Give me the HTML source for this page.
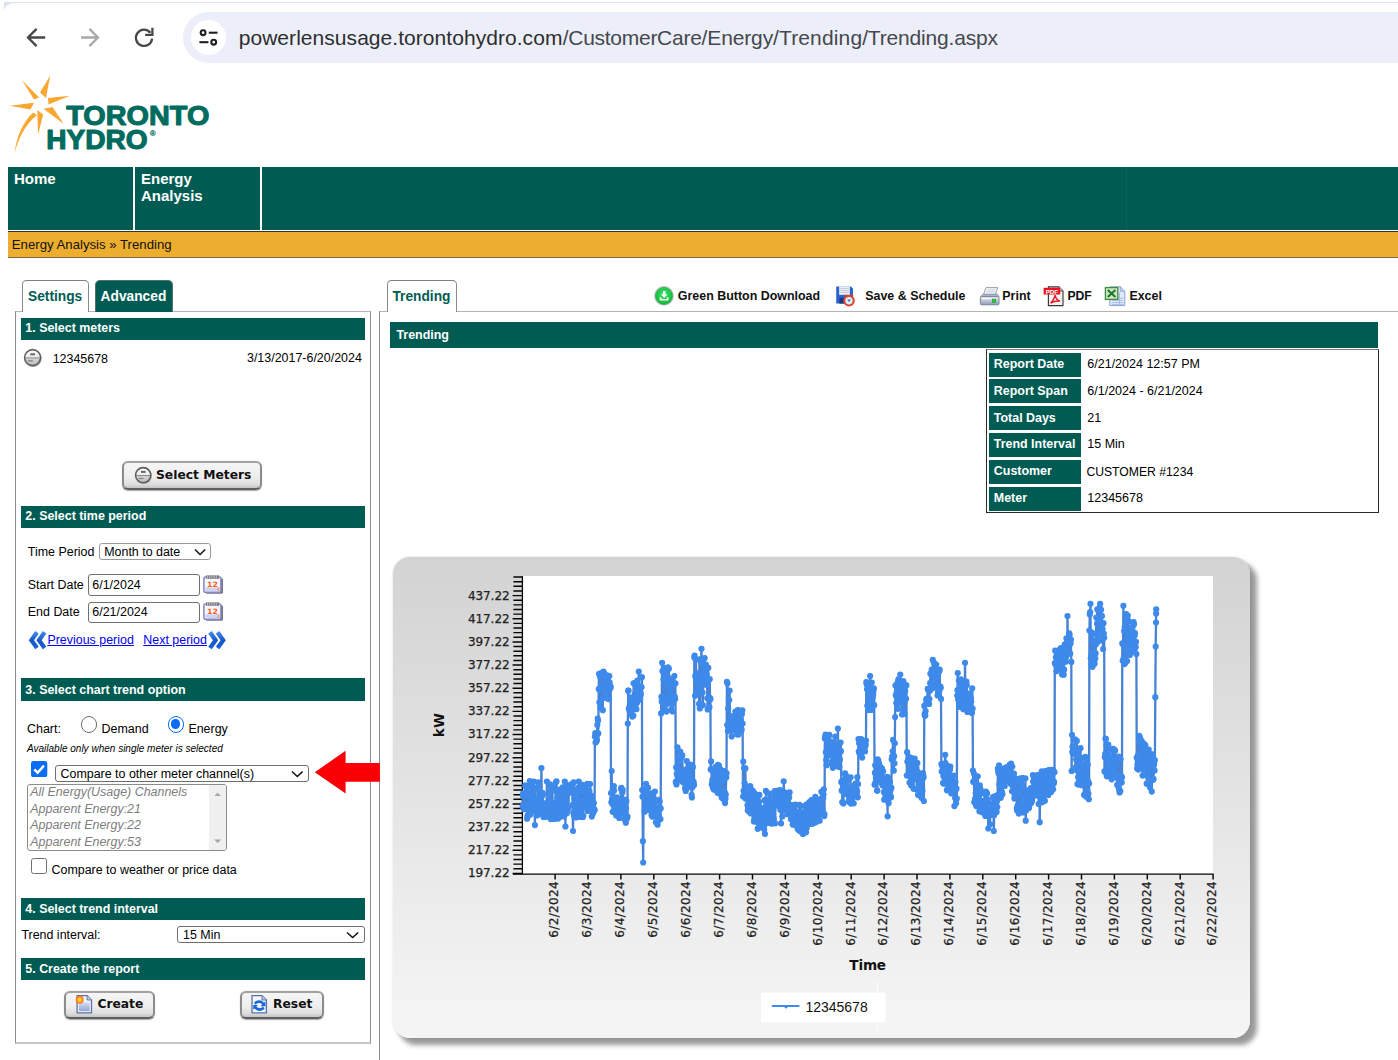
<!DOCTYPE html>
<html lang="en"><head><meta charset="utf-8"><title>Trending</title>
<style>
*{box-sizing:border-box;margin:0;padding:0}
html,body{width:1398px;height:1060px;overflow:hidden;background:#fff}
body{position:relative;font-family:"Liberation Sans",sans-serif;color:#000}
.a{position:absolute}
.t{position:absolute;white-space:nowrap}
.hdr{position:absolute;background:#005c53;left:20.7px;width:344px;height:21.6px}
.btn{position:absolute;border:2px solid;border-color:#a2a2a2 #8c8c8c #606060 #8c8c8c;border-radius:6px;background:linear-gradient(#f5f5f5 0%,#eeeeee 55%,#dedede 85%,#c4c4c4 100%);box-shadow:0 .600px 1px rgba(0,0,0,.35)}
.sel{position:absolute;border:1px solid #9a9a9a;border-radius:3px;background:#fff}
.inp{position:absolute;border:1px solid #6f6f6f;border-radius:3px;background:#fff}
.cell{position:absolute;background:#005c53;left:989px;width:91.7px;height:24.2px}
</style></head>
<body>

<div class="a" style="left:4px;top:1.8px;width:1394px;height:1.3px;background:#dde3ec"></div>
<div class="a" style="left:4px;top:2px;width:11px;height:8px;background:#dde3ec;overflow:hidden"><div style="position:absolute;left:0;top:1px;width:30px;height:30px;border-top-left-radius:11px 8px;background:#fff"></div></div>
<svg class="a" style="left:0;top:0" width="180" height="70" viewBox="0 0 180 70" fill="none" stroke-width="2.3"><path d="M45.2 37.5H28.6M36.6 28.9L28 37.5l8.6 8.6" stroke="#474747"/><path d="M81 37.5h16.6M89.4 28.9L98 37.5l-8.6 8.6" stroke="#a9a9a9"/><path d="M152.100 38.600a8.100 8.100 0 1 1-1.700-5.800" stroke="#474747"/><path d="M152.400 27.800v7h-7.200" stroke="#474747"/></svg>
<div class="a" style="left:183px;top:12px;width:1300px;height:51px;border-radius:25.5px;background:#eceff9"></div>
<div class="a" style="left:190.6px;top:19.7px;width:35.6px;height:35.6px;border-radius:50%;background:#fff"></div>
<svg class="a" style="left:195px;top:25px" width="28" height="26" viewBox="195 25 28 26" fill="none" stroke="#1f1f1f" stroke-width="2.1"><circle cx="203.1" cy="32.7" r="2.4"/><path d="M208.8 32.7h8.7"/><path d="M199.4 42.2h9"/><circle cx="213.7" cy="42.2" r="2.4"/></svg>
<span class="t" style="left:238.70px;top:26px;font-size:21px;line-height:23px;color:#2e2e2e;letter-spacing:0.05px;">powerlensusage.torontohydro.com</span>
<span class="t" style="left:562.70px;top:26px;font-size:21px;line-height:23px;color:#45484d;letter-spacing:-0.27px;">/CustomerCare</span>
<span class="t" style="left:701.60px;top:26px;font-size:21px;line-height:23px;color:#45484d;letter-spacing:-0.14px;">/Energy</span>
<span class="t" style="left:773.00px;top:26px;font-size:21px;line-height:23px;color:#45484d;letter-spacing:0.14px;">/Trending</span>
<span class="t" style="left:862.20px;top:26px;font-size:21px;line-height:23px;color:#45484d;letter-spacing:-0.17px;">/Trending.aspx</span>
<svg class="a" style="left:0;top:70px" width="230" height="95" viewBox="0 70 230 95"><g fill="#f9a732"><polygon points="50.2,75.5 46,98 40,92.5"/><polygon points="22,80 39,97.5 34,99.5"/><polygon points="70,95.8 48.5,104.5 48,98"/><polygon points="10,105.8 34,102.8 30.5,109.6"/><polygon points="63.8,124 43.5,108.8 52.5,107"/><polygon points="38,134.5 37.3,110 43.2,114.5"/><path d="M33.2 112.4C22.5 122 16.5 137 14.3 154.200c4-16 11-30 22.600-39z"/></g><g fill="#006b5f" font-family='"Liberation Sans", sans-serif' font-weight="700" stroke="#006b5f" stroke-width="1.1" stroke-linejoin="round"><text x="66.3" y="124.600" font-size="27.8" textLength="143" lengthAdjust="spacingAndGlyphs">TORONTO</text><text x="46.2" y="148.900" font-size="26.8" textLength="101.400" lengthAdjust="spacingAndGlyphs">HYDRO</text><text x="150" y="135.600" font-size="7.5" stroke-width=".2">®</text></g></svg>
<div class="a" style="left:8px;top:167px;width:1390px;height:62.6px;background:#005c53"></div>
<div class="a" style="left:133px;top:167px;width:2px;height:62.6px;background:#fff"></div>
<div class="a" style="left:259.6px;top:167px;width:2px;height:62.6px;background:#fff"></div>
<div class="a" style="left:1126px;top:167px;width:1px;height:62.6px;background:#0b655c"></div>
<span class="t" style="left:14.00px;top:170px;font-size:15px;line-height:17px;font-weight:700;color:#fff;">Home</span>
<span class="t" style="left:141.00px;top:170px;font-size:15px;line-height:17px;font-weight:700;color:#fff;">Energy</span>
<span class="t" style="left:141.00px;top:187px;font-size:15px;line-height:17px;font-weight:700;color:#fff;">Analysis</span>
<div class="a" style="left:8px;top:230.6px;width:1390px;height:27.6px;background:#edae30;border-top:1px solid #3a3522;border-bottom:1.4px solid #7c6a3c"></div>
<span class="t" style="left:11.80px;top:237px;font-size:13.2px;line-height:15px;color:#111;">Energy Analysis » Trending</span>
<div class="a" style="left:15px;top:311.3px;width:356.3px;height:733px;border:1px solid #8d8d8d;border-top:1.400px solid #b4b4b4;border-bottom:2px solid #c6c6c6;background:#fff"></div>
<div class="a" style="left:21.8px;top:279.8px;width:67px;height:32.6px;border:1.200px solid #8a8a8a;border-top:1.600px solid #808080;border-bottom:none;border-radius:4.500px 4.500px 0 0;background:#fff"></div>
<div class="a" style="left:95px;top:279.8px;width:78px;height:32px;border:1.2px solid #56706c;border-bottom:none;border-radius:5px 5px 0 0;background:#005c53"></div>
<span class="t" style="left:28.00px;top:289px;font-size:13.75px;line-height:15px;font-weight:700;color:#005c53;">Settings</span>
<span class="t" style="left:100.60px;top:289px;font-size:13.75px;line-height:15px;font-weight:700;color:#fff;">Advanced</span>
<div class="hdr" style="top:318.3px;height:21.6px"></div>
<span class="t" style="left:25.30px;top:321px;font-size:12.45px;line-height:14px;font-weight:700;color:#fff;">1. Select meters</span>
<svg class="a" style="left:23.3px;top:348.0px" width="20.2" height="20.2" viewBox="-9.6 -9.6 20.2 20.2"><defs><linearGradient id="mg32" x1="0" y1="0" x2="0" y2="1"><stop offset="0" stop-color="#fafafa"/><stop offset=".5" stop-color="#ececec"/><stop offset=".52" stop-color="#d4d4d4"/><stop offset="1" stop-color="#bcbcbc"/></linearGradient></defs><circle cx=".6" cy=".8" r="8.6" fill="#bbb"/><circle r="8.0" fill="url(#mg32)" stroke="#5e5e5e" stroke-width="1.600"/><path d="M-7.1 .3H7.1" stroke="#8a8a8a" stroke-width="1"/><rect x="-2.2" y="-4.3" width="4.6" height="2" fill="#666"/><rect x="-4.6" y="2.6" width="4.8" height="1.3" fill="#888"/></svg>
<span class="t" style="left:52.70px;top:352px;font-size:12.45px;line-height:14px;">12345678</span>
<span class="t" style="left:247.00px;top:351px;font-size:12.45px;line-height:14px;">3/13/2017-6/20/2024</span>
<div class="btn" style="left:122.2px;top:461.2px;width:140.2px;height:29px"></div>
<svg class="a" style="left:133.7px;top:466.1px" width="19.4" height="19.4" viewBox="-9.2 -9.2 19.4 19.4"><defs><linearGradient id="mg142" x1="0" y1="0" x2="0" y2="1"><stop offset="0" stop-color="#fafafa"/><stop offset=".5" stop-color="#ececec"/><stop offset=".52" stop-color="#d4d4d4"/><stop offset="1" stop-color="#bcbcbc"/></linearGradient></defs><circle cx=".6" cy=".8" r="8.2" fill="#bbb"/><circle r="7.6" fill="url(#mg142)" stroke="#5e5e5e" stroke-width="1.600"/><path d="M-6.699999999999999 .3H6.699999999999999" stroke="#8a8a8a" stroke-width="1"/><rect x="-2.2" y="-4.3" width="4.6" height="2" fill="#666"/><rect x="-4.6" y="2.6" width="4.8" height="1.3" fill="#888"/></svg>
<span class="t" style="left:156.00px;top:468px;font-size:12.3px;line-height:14px;font-weight:700;color:#111;font-family:'DejaVu Sans', sans-serif;">Select Meters</span>
<div class="hdr" style="top:505.9px;height:21.9px"></div>
<span class="t" style="left:25.30px;top:509px;font-size:12.45px;line-height:14px;font-weight:700;color:#fff;">2. Select time period</span>
<span class="t" style="left:27.80px;top:545px;font-size:12.45px;line-height:14px;">Time Period</span>
<div class="sel" style="left:98.7px;top:543.3px;width:112.8px;height:16.8px"></div>
<span class="t" style="left:104.20px;top:545px;font-size:12.45px;line-height:14px;">Month to date</span>
<svg class="a" style="left:193.6px;top:548.2px" width="12.200000000000017" height="8" viewBox="193.6 548.2 12.200000000000017 8"><path d="M194.6 549.7L199.7 554.7L204.8 549.7" fill="none" stroke="#111" stroke-width="1.5"/></svg>
<span class="t" style="left:27.80px;top:578px;font-size:12.45px;line-height:14px;">Start Date</span>
<div class="inp" style="left:88.2px;top:574.2px;width:111.6px;height:21.800px"></div>
<span class="t" style="left:92.30px;top:578px;font-size:12.45px;line-height:14px;">6/1/2024</span>
<span class="t" style="left:27.80px;top:605px;font-size:12.45px;line-height:14px;">End Date</span>
<div class="inp" style="left:88.2px;top:601.6px;width:111.6px;height:21.1px"></div>
<span class="t" style="left:92.30px;top:605px;font-size:12.45px;line-height:14px;">6/21/2024</span>
<svg class="a" style="left:202.6px;top:574.8px" width="21" height="20" viewBox="0 0 21 20"><rect x="2.600" y="3.200" width="17.400" height="15.600" rx="1.600" fill="#5e5e6c" opacity=".85"/><rect x=".900" y="1.900" width="17" height="15.400" rx="1.500" fill="#f6f6ff" stroke="#8686c6" stroke-width="1.500"/><rect x="3" y=".300" width="13" height="3.600" fill="#7c7c86"/><path d="M4.500 .300v3.600M6.700 .300v3.600M8.900 .300v3.600M11.100 .300v3.600M13.300 .300v3.600" stroke="#d8d8e0" stroke-width=".7"/><rect x="2.400" y="12.400" width="14" height="3.600" fill="#cdd2f3"/><rect x="14.500" y="12.400" width="1.900" height="3.600" fill="#f0a070"/><text x="9.400" y="11.900" font-size="7.300" font-weight="700" fill="#ff5a12" text-anchor="middle" textLength="10.800" lengthAdjust="spacingAndGlyphs" font-family='"DejaVu Sans", sans-serif'>12</text></svg>
<svg class="a" style="left:202.6px;top:602px" width="21" height="20" viewBox="0 0 21 20"><rect x="2.600" y="3.200" width="17.400" height="15.600" rx="1.600" fill="#5e5e6c" opacity=".85"/><rect x=".900" y="1.900" width="17" height="15.400" rx="1.500" fill="#f6f6ff" stroke="#8686c6" stroke-width="1.500"/><rect x="3" y=".300" width="13" height="3.600" fill="#7c7c86"/><path d="M4.500 .300v3.600M6.700 .300v3.600M8.900 .300v3.600M11.100 .300v3.600M13.300 .300v3.600" stroke="#d8d8e0" stroke-width=".7"/><rect x="2.400" y="12.400" width="14" height="3.600" fill="#cdd2f3"/><rect x="14.500" y="12.400" width="1.900" height="3.600" fill="#f0a070"/><text x="9.400" y="11.900" font-size="7.300" font-weight="700" fill="#ff5a12" text-anchor="middle" textLength="10.800" lengthAdjust="spacingAndGlyphs" font-family='"DejaVu Sans", sans-serif'>12</text></svg>
<svg class="a" style="left:28.2px;top:631px" width="19" height="19" viewBox="0 0 19 19"><defs><linearGradient id="bg28" x1="0" y1="0" x2="0" y2="1"><stop offset="0" stop-color="#3f8ae6"/><stop offset=".5" stop-color="#1858c8"/><stop offset="1" stop-color="#1a62d2"/></linearGradient></defs><g  fill="none" stroke="url(#bg28)" stroke-width="4.300"><path d="M9 1.300L3.400 9.200 9 17.100"/><path d="M16.600 1.300L11 9.200l5.600 7.900"/></g></svg>
<span class="t" style="left:47.40px;top:633px;font-size:12.45px;line-height:14px;color:#0000ee;text-decoration:underline;">Previous period</span>
<span class="t" style="left:143.30px;top:633px;font-size:12.45px;line-height:14px;color:#0000ee;text-decoration:underline;">Next period</span>
<svg class="a" style="left:207.8px;top:631px" width="19" height="19" viewBox="0 0 19 19"><defs><linearGradient id="bg207" x1="0" y1="0" x2="0" y2="1"><stop offset="0" stop-color="#3f8ae6"/><stop offset=".5" stop-color="#1858c8"/><stop offset="1" stop-color="#1a62d2"/></linearGradient></defs><g transform="translate(18.600 0) scale(-1 1)" fill="none" stroke="url(#bg207)" stroke-width="4.300"><path d="M9 1.300L3.400 9.200 9 17.100"/><path d="M16.600 1.300L11 9.200l5.600 7.900"/></g></svg>
<div class="hdr" style="top:678.2px;height:22.4px"></div>
<span class="t" style="left:25.30px;top:683px;font-size:12.45px;line-height:14px;font-weight:700;color:#fff;">3. Select chart trend option</span>
<span class="t" style="left:27.00px;top:722px;font-size:12.45px;line-height:14px;">Chart:</span>
<div class="a" style="left:80.6px;top:716.4px;width:16.2px;height:16.2px;border-radius:50%;border:1.25px solid #6f6f6f;background:#fff"></div>
<span class="t" style="left:101.60px;top:722px;font-size:12.45px;line-height:14px;">Demand</span>
<div class="a" style="left:167.9px;top:716.4px;width:16.2px;height:16.2px;border-radius:50%;border:1.5px solid #0a6cf5;background:#fff"><div style="position:absolute;left:1.700px;top:1.700px;width:9.800px;height:9.800px;border-radius:50%;background:#0a6cf5"></div></div>
<span class="t" style="left:188.40px;top:722px;font-size:12.45px;line-height:14px;">Energy</span>
<span class="t" style="left:27.00px;top:743px;font-size:10.02px;line-height:11px;font-style:italic;">Available only when single meter is selected</span>
<svg class="a" style="left:31.4px;top:761.1px" width="16.3" height="16.3" viewBox="0 0 16 16"><rect width="16" height="16" rx="2.4" fill="#0b6cf4"/><path d="M3.3 8.2l3.2 3.3 6.2-7" fill="none" stroke="#fff" stroke-width="2.400"/></svg>
<div class="sel" style="left:55.2px;top:765.200px;width:253.800px;height:16.600px;border-color:#6f6f6f"></div>
<span class="t" style="left:60.50px;top:767px;font-size:12.45px;line-height:14px;">Compare to other meter channel(s)</span>
<svg class="a" style="left:290.8px;top:769.5px" width="12.599999999999966" height="8" viewBox="290.8 769.5 12.599999999999966 8"><path d="M291.8 771.0L297.1 776.0L302.4 771.0" fill="none" stroke="#111" stroke-width="1.5"/></svg>
<div class="a" style="left:26.6px;top:784.3px;width:200.4px;height:66.400px;border:1px solid #8c8c8c;border-radius:3px;background:#fff;overflow:hidden"><div style="position:absolute;right:0;top:0;width:17px;height:100%;background:#f0f0f0"></div><svg style="position:absolute;right:4.800px;top:6.600px" width="7.400" height="4.600" viewBox="0 0 9 6"><path d="M0 5.500L4.500 .500 9 5.500z" fill="#a8a8a8"/></svg><svg style="position:absolute;right:4.800px;bottom:6.600px" width="7.400" height="4.600" viewBox="0 0 9 6"><path d="M0 .500L4.500 5.500 9 .500z" fill="#a8a8a8"/></svg></div>
<span class="t" style="left:30.30px;top:785px;font-size:12.45px;line-height:14px;color:#7d7d7d;font-style:italic;">All Energy(Usage) Channels</span>
<span class="t" style="left:30.30px;top:802px;font-size:12.45px;line-height:14px;color:#7d7d7d;font-style:italic;">Apparent Energy:21</span>
<span class="t" style="left:30.30px;top:818px;font-size:12.45px;line-height:14px;color:#7d7d7d;font-style:italic;">Apparent Energy:22</span>
<span class="t" style="left:30.30px;top:835px;font-size:12.45px;line-height:14px;color:#7d7d7d;font-style:italic;">Apparent Energy:53</span>
<div class="a" style="left:31px;top:857.8px;width:16.4px;height:16.2px;border:1.25px solid #6f6f6f;border-radius:2.6px;background:#fff"></div>
<span class="t" style="left:51.50px;top:863px;font-size:12.45px;line-height:14px;">Compare to weather or price data</span>
<div class="hdr" style="top:898.3px;height:21.7px"></div>
<span class="t" style="left:25.30px;top:902px;font-size:12.45px;line-height:14px;font-weight:700;color:#fff;">4. Select trend interval</span>
<span class="t" style="left:21.40px;top:928px;font-size:12.45px;line-height:14px;">Trend interval:</span>
<div class="sel" style="left:177.4px;top:926.4px;width:187.5px;height:16.6px;border-color:#6f6f6f"></div>
<span class="t" style="left:183.00px;top:928px;font-size:12.45px;line-height:14px;">15 Min</span>
<svg class="a" style="left:346.2px;top:931.0px" width="13.199999999999989" height="8" viewBox="346.2 931.0 13.199999999999989 8"><path d="M347.2 932.5L352.79999999999995 937.5L358.4 932.5" fill="none" stroke="#111" stroke-width="1.5"/></svg>
<div class="hdr" style="top:957.9px;height:22.4px"></div>
<span class="t" style="left:25.30px;top:962px;font-size:12.45px;line-height:14px;font-weight:700;color:#fff;">5. Create the report</span>
<div class="btn" style="left:64px;top:990.7px;width:90.8px;height:28.6px"></div>
<svg class="a" style="left:74.500px;top:994px" width="18" height="20" viewBox="74.500 994 18 20"><defs><linearGradient id="cg" x1="0" y1="0" x2="0" y2="1"><stop offset="0" stop-color="#d3dcf2"/><stop offset="1" stop-color="#92a6d6"/></linearGradient></defs><path d="M76.600 995.600h10l4.400 4.400v12.800h-14.400z" fill="#f3f6fc" stroke="#5a72a8" stroke-width="1.300"/><path d="M86.600 995.600v4.400h4.400" fill="#b9c6e6" stroke="#5a72a8" stroke-width=".900"/><rect x="78.400" y="1002.400" width="10.800" height="8.800" fill="url(#cg)"/><circle cx="79.200" cy="999.700" r="4" fill="#ff7a2a"/><circle cx="79.200" cy="999.700" r="2.300" fill="#ffd21f"/></svg>
<span class="t" style="left:97.40px;top:997px;font-size:12.3px;line-height:14px;font-weight:700;color:#111;font-family:'DejaVu Sans', sans-serif;">Create</span>
<div class="btn" style="left:239.9px;top:990.7px;width:83.8px;height:28.6px"></div>
<svg class="a" style="left:250px;top:994px" width="18" height="20" viewBox="250 994 18 20"><path d="M252 995.600h10l4.400 4.400v12.800h-14.400z" fill="#f3f6fc" stroke="#5a72a8" stroke-width="1.300"/><path d="M262 995.600v4.400h4.400" fill="#b9c6e6" stroke="#5a72a8" stroke-width=".900"/><path d="M254 1002.800c2.200-3.200 7.600-3.400 10 0l1.400-1.200v4.600h-4.800l1.600-1.600c-1.600-2-5-2-6.600.200z" fill="#1c66dc"/><path d="M264.600 1008.400c-2.200 3.200-7.600 3.400-10 0l-1.400 1.200v-4.600h4.800l-1.600 1.600c1.600 2 5 2 6.600-.200z" fill="#1c66dc"/></svg>
<span class="t" style="left:273.00px;top:997px;font-size:12.3px;line-height:14px;font-weight:700;color:#111;font-family:'DejaVu Sans', sans-serif;">Reset</span>
<div class="a" style="left:379.2px;top:311.3px;width:1100px;height:800px;border:1px solid #8d8d8d;border-top-color:#b4b4b4;background:#fff"></div>
<div class="a" style="left:386.5px;top:280.2px;width:70.4px;height:32.2px;border:1.200px solid #8a8a8a;border-top:1.600px solid #808080;border-bottom:none;border-radius:4.500px 4.500px 0 0;background:#fff"></div>
<span class="t" style="left:392.40px;top:289px;font-size:13.75px;line-height:15px;font-weight:700;color:#005c53;">Trending</span>
<div class="a" style="left:389.7px;top:322.2px;width:988.8px;height:25.500px;background:#005c53"></div>
<span class="t" style="left:396.40px;top:328px;font-size:12.45px;line-height:14px;font-weight:700;color:#fff;">Trending</span>
<svg class="a" style="left:650px;top:282px" width="480" height="28" viewBox="650 282 480 28"><defs><radialGradient id="gb" cx=".5" cy=".4" r=".6"><stop offset="0" stop-color="#3be66a"/><stop offset="1" stop-color="#12b238"/></radialGradient><linearGradient id="pr" x1="0" y1="0" x2="0" y2="1"><stop offset="0" stop-color="#eef1f6"/><stop offset="1" stop-color="#8e9bb6"/></linearGradient></defs><circle cx="664" cy="295.9" r="9.8" fill="#c4b6c4"/><circle cx="664" cy="295.9" r="8.8" fill="url(#gb)"/><path d="M662.9 291.100h2.600v3.500h2l-3.300 3.500-3.300-3.500h2z" fill="#fff"/><path d="M660.500 297.200v2.600h7.200v-2.600" fill="none" stroke="#fff" stroke-width="1.600" opacity=".92"/><path d="M836.200 286.400h14.600l2.200 2v15.200h-16.800z" fill="#2b63cc"/><rect x="839.200" y="286.400" width="10.600" height="8.400" fill="#f1f3f8"/><path d="M840.200 288.400h8.600M840.200 290.400h8.600M840.200 292.400h8.600" stroke="#b4b8c6" stroke-width=".8"/><rect x="839.400" y="297.600" width="6" height="6" fill="#173a8e"/><circle cx="849" cy="300.700" r="5.800" fill="#e2432c"/><circle cx="849" cy="300.700" r="3.700" fill="#d8f0f6"/><path d="M847.200 299.600l1.800 2.400 1.800-2.400z" fill="#3b6fb3"/><rect x="845" y="294.800" width="2.200" height="1.600" fill="#e2432c" transform="rotate(-40 846 295.600)"/><rect x="851" y="294.800" width="2.200" height="1.600" fill="#e2432c" transform="rotate(40 852 295.600)"/><path d="M986 287.600h11.600l-2.200 7.200h-12z" fill="#f3f4f7" stroke="#8d95a8" stroke-width=".9"/><path d="M987.400 289.800h7.600M986.800 291.800h7.600" stroke="#c3c8d3" stroke-width=".8"/><path d="M983 294.200h14.400l1.800 2.600h-18.800z" fill="#aab4c8" stroke="#7a869e" stroke-width=".7"/><rect x="980.400" y="296.600" width="18.600" height="8.200" rx="1.300" fill="url(#pr)" stroke="#6f7b93" stroke-width=".9"/><rect x="982" y="298" width="9" height="1.200" fill="#fff" opacity=".8"/><rect x="992.400" y="299.200" width="3.400" height="3.300" fill="#1fd431" stroke="#0e8e1c" stroke-width=".5"/><path d="M1048.400 286.800h10.400l4.200 4.200v14.600h-14.600z" fill="#f4f6f6" stroke="#383838" stroke-width="1.150"/><path d="M1058.800 286.800v4.200h4.200" fill="#dcdcdc" stroke="#383838" stroke-width=".9"/><rect x="1043.600" y="287.800" width="16.600" height="6.700" fill="#e8141f"/><text x="1051.900" y="293.500" font-size="6.200" font-weight="700" fill="#fff" text-anchor="middle" font-family='"Liberation Sans", sans-serif'>PDF</text><path d="M1050.600 303.200c2.600-2.800 4.200-5.400 4.500-8 .6 3.200 2.500 5.200 5 5.900-3.500-.3-7 .5-9.500 2.100z" fill="none" stroke="#e8141f" stroke-width="1.350"/><path d="M1109.800 286.800h10.600l4.400 4.400v14.400h-15z" fill="#dfe7fa" stroke="#8a9fd6" stroke-width="1"/><path d="M1120.400 286.800v4.400h4.400" fill="#c3d0f2" stroke="#8a9fd6" stroke-width=".8"/><path d="M1112 298.200h11M1112 300.400h11M1112 302.600h11M1112 304.600h11M1119.500 292.500v12.500" stroke="#a5b7e6" stroke-width=".9"/><rect x="1105.400" y="287.600" width="12.400" height="11.800" fill="#cfe6c6" stroke="#3c8c3c" stroke-width="1.300"/><path d="M1107.800 290l7.600 7M1115.400 290l-7.600 7" stroke="#1f7a2c" stroke-width="2.100"/></svg>
<span class="t" style="left:677.80px;top:289px;font-size:12.45px;line-height:14px;font-weight:700;color:#111;">Green Button Download</span>
<span class="t" style="left:865.20px;top:289px;font-size:12.45px;line-height:14px;font-weight:700;color:#111;">Save &amp; Schedule</span>
<span class="t" style="left:1002.30px;top:289px;font-size:12.45px;line-height:14px;font-weight:700;color:#111;">Print</span>
<span class="t" style="left:1067.40px;top:289px;font-size:12.2px;line-height:14px;font-weight:700;color:#111;">PDF</span>
<span class="t" style="left:1129.40px;top:289px;font-size:12.45px;line-height:14px;font-weight:700;color:#111;">Excel</span>
<div class="a" style="left:986.3px;top:349.3px;width:392.6px;height:164px;border:1.2px solid #2b2b2b;border-top-color:#777;background:#fff"></div>
<div class="cell" style="top:352.5px"></div>
<span class="t" style="left:993.80px;top:357px;font-size:12.45px;line-height:14px;font-weight:700;color:#fff;">Report Date</span>
<span class="t" style="left:1087.30px;top:357px;font-size:12.5px;line-height:14px;">6/21/2024 12:57 PM</span>
<div class="cell" style="top:379.3px"></div>
<span class="t" style="left:993.80px;top:384px;font-size:12.45px;line-height:14px;font-weight:700;color:#fff;">Report Span</span>
<span class="t" style="left:1087.30px;top:384px;font-size:12.5px;line-height:14px;">6/1/2024 - 6/21/2024</span>
<div class="cell" style="top:406.1px"></div>
<span class="t" style="left:993.80px;top:411px;font-size:12.45px;line-height:14px;font-weight:700;color:#fff;">Total Days</span>
<span class="t" style="left:1087.30px;top:411px;font-size:12.5px;line-height:14px;">21</span>
<div class="cell" style="top:432.9px"></div>
<span class="t" style="left:993.80px;top:437px;font-size:12.45px;line-height:14px;font-weight:700;color:#fff;">Trend Interval</span>
<span class="t" style="left:1087.30px;top:437px;font-size:12.5px;line-height:14px;">15 Min</span>
<div class="cell" style="top:459.7px"></div>
<span class="t" style="left:993.80px;top:464px;font-size:12.45px;line-height:14px;font-weight:700;color:#fff;">Customer</span>
<span class="t" style="left:1086.40px;top:465px;font-size:12.2px;line-height:14px;">CUSTOMER #1234</span>
<div class="cell" style="top:486.5px"></div>
<span class="t" style="left:993.80px;top:491px;font-size:12.45px;line-height:14px;font-weight:700;color:#fff;">Meter</span>
<span class="t" style="left:1087.30px;top:491px;font-size:12.5px;line-height:14px;">12345678</span>
<div class="a" style="left:392.5px;top:556.5px;width:857px;height:481px;border-radius:17px;background:linear-gradient(#d3d3d3 0%,#d6d6d6 10%,#f3f3f3 92%,#f4f4f4 100%);box-shadow:6.500px 6.500px 5.500px rgba(0,0,0,.4),0 0 2.500px rgba(0,0,0,.14)"></div>
<div class="a" style="left:522.6px;top:576.3px;width:690.8px;height:297.4px;background:#fff"></div>
<svg class="a" style="left:392px;top:556px" width="870" height="490" viewBox="392 556 870 490">
<g stroke="#050505" stroke-width="1.450">
<path d="M513.4 577.08H522.6M513.4 581.71H522.6M513.4 586.34H522.6M513.4 590.97H522.6M512.6 595.60H522.6M513.4 600.23H522.6M513.4 604.86H522.6M513.4 609.49H522.6M513.4 614.12H522.6M512.6 618.75H522.6M513.4 623.38H522.6M513.4 628.01H522.6M513.4 632.64H522.6M513.4 637.27H522.6M512.6 641.90H522.6M513.4 646.53H522.6M513.4 651.16H522.6M513.4 655.79H522.6M513.4 660.42H522.6M512.6 665.05H522.6M513.4 669.68H522.6M513.4 674.31H522.6M513.4 678.94H522.6M513.4 683.57H522.6M512.6 688.20H522.6M513.4 692.83H522.6M513.4 697.46H522.6M513.4 702.09H522.6M513.4 706.72H522.6M512.6 711.35H522.6M513.4 715.98H522.6M513.4 720.61H522.6M513.4 725.24H522.6M513.4 729.87H522.6M512.6 734.50H522.6M513.4 739.13H522.6M513.4 743.76H522.6M513.4 748.39H522.6M513.4 753.02H522.6M512.6 757.65H522.6M513.4 762.28H522.6M513.4 766.91H522.6M513.4 771.54H522.6M513.4 776.17H522.6M512.6 780.80H522.6M513.4 785.43H522.6M513.4 790.06H522.6M513.4 794.69H522.6M513.4 799.32H522.6M512.6 803.95H522.6M513.4 808.58H522.6M513.4 813.21H522.6M513.4 817.84H522.6M513.4 822.47H522.6M512.6 827.10H522.6M513.4 831.73H522.6M513.4 836.36H522.6M513.4 840.99H522.6M513.4 845.62H522.6M512.6 850.25H522.6M513.4 854.88H522.6M513.4 859.51H522.6M513.4 864.14H522.6M513.4 868.77H522.6M512.6 873.40H522.6"/>
<path d="M522.4 576.3V874.3" stroke-width="1.3"/><path d="M513 874.200H1213.6" stroke-width="1.3"/>
<path d="M555.10 874V879.6M588.00 874V879.6M620.90 874V879.6M653.80 874V879.6M686.70 874V879.6M719.60 874V879.6M752.50 874V879.6M785.40 874V879.6M818.30 874V879.6M851.20 874V879.6M884.10 874V879.6M917.00 874V879.6M949.90 874V879.6M982.80 874V879.6M1015.70 874V879.6M1048.60 874V879.6M1081.50 874V879.6M1114.40 874V879.6M1147.30 874V879.6M1180.20 874V879.6M1213.10 874V879.6"/></g>
<g font-family='"DejaVu Sans", sans-serif' font-size="12" fill="#222" stroke="#222" stroke-width=".25">
<text x="509.600" y="599.50" text-anchor="end" textLength="41.700">437.22</text>
<text x="509.600" y="622.65" text-anchor="end" textLength="41.700">417.22</text>
<text x="509.600" y="645.80" text-anchor="end" textLength="41.700">397.22</text>
<text x="509.600" y="668.95" text-anchor="end" textLength="41.700">377.22</text>
<text x="509.600" y="692.10" text-anchor="end" textLength="41.700">357.22</text>
<text x="509.600" y="715.25" text-anchor="end" textLength="41.700">337.22</text>
<text x="509.600" y="738.40" text-anchor="end" textLength="41.700">317.22</text>
<text x="509.600" y="761.55" text-anchor="end" textLength="41.700">297.22</text>
<text x="509.600" y="784.70" text-anchor="end" textLength="41.700">277.22</text>
<text x="509.600" y="807.85" text-anchor="end" textLength="41.700">257.22</text>
<text x="509.600" y="831.00" text-anchor="end" textLength="41.700">237.22</text>
<text x="509.600" y="854.15" text-anchor="end" textLength="41.700">217.22</text>
<text x="509.600" y="877.30" text-anchor="end" textLength="41.700">197.22</text>
<text transform="translate(558.40 881.3) rotate(-90)" text-anchor="end" textLength="56.4">6/2/2024</text>
<text transform="translate(591.30 881.3) rotate(-90)" text-anchor="end" textLength="56.4">6/3/2024</text>
<text transform="translate(624.20 881.3) rotate(-90)" text-anchor="end" textLength="56.4">6/4/2024</text>
<text transform="translate(657.10 881.3) rotate(-90)" text-anchor="end" textLength="56.4">6/5/2024</text>
<text transform="translate(690.00 881.3) rotate(-90)" text-anchor="end" textLength="56.4">6/6/2024</text>
<text transform="translate(722.90 881.3) rotate(-90)" text-anchor="end" textLength="56.4">6/7/2024</text>
<text transform="translate(755.80 881.3) rotate(-90)" text-anchor="end" textLength="56.4">6/8/2024</text>
<text transform="translate(788.70 881.3) rotate(-90)" text-anchor="end" textLength="56.4">6/9/2024</text>
<text transform="translate(821.60 881.3) rotate(-90)" text-anchor="end" textLength="64.4">6/10/2024</text>
<text transform="translate(854.50 881.3) rotate(-90)" text-anchor="end" textLength="64.4">6/11/2024</text>
<text transform="translate(887.40 881.3) rotate(-90)" text-anchor="end" textLength="64.4">6/12/2024</text>
<text transform="translate(920.30 881.3) rotate(-90)" text-anchor="end" textLength="64.4">6/13/2024</text>
<text transform="translate(953.20 881.3) rotate(-90)" text-anchor="end" textLength="64.4">6/14/2024</text>
<text transform="translate(986.10 881.3) rotate(-90)" text-anchor="end" textLength="64.4">6/15/2024</text>
<text transform="translate(1019.00 881.3) rotate(-90)" text-anchor="end" textLength="64.4">6/16/2024</text>
<text transform="translate(1051.90 881.3) rotate(-90)" text-anchor="end" textLength="64.4">6/17/2024</text>
<text transform="translate(1084.80 881.3) rotate(-90)" text-anchor="end" textLength="64.4">6/18/2024</text>
<text transform="translate(1117.70 881.3) rotate(-90)" text-anchor="end" textLength="64.4">6/19/2024</text>
<text transform="translate(1150.60 881.3) rotate(-90)" text-anchor="end" textLength="64.4">6/20/2024</text>
<text transform="translate(1183.50 881.3) rotate(-90)" text-anchor="end" textLength="64.4">6/21/2024</text>
<text transform="translate(1216.40 881.3) rotate(-90)" text-anchor="end" textLength="64.4">6/22/2024</text>
</g>
<text x="849.300" y="970.400" font-family='"DejaVu Sans", sans-serif' font-size="13.600" font-weight="700" fill="#111" textLength="36.800">Time</text>
<text transform="translate(444.200 737.200) rotate(-90)" font-family='"DejaVu Sans", sans-serif' font-size="13.500" font-weight="700" fill="#111" textLength="24.200">kW</text>
<defs><marker id="dot" markerWidth="7" markerHeight="7" refX="3.5" refY="3.5" markerUnits="userSpaceOnUse"><circle cx="3.5" cy="3.5" r="3.1" fill="#3e8aeb"/></marker></defs>
<polyline fill="none" stroke="#4682d6" stroke-width="2.3" stroke-linejoin="round" marker-start="url(#dot)" marker-mid="url(#dot)" marker-end="url(#dot)" points="522.6,806.0 522.9,795.4 523.3,793.1 523.6,807.2 524.0,809.2 524.3,808.6 524.7,807.7 525.0,806.6 525.3,785.3 525.7,786.2 526.0,795.3 526.4,792.0 526.7,806.0 527.1,818.7 527.4,815.7 527.7,789.8 528.1,796.5 528.4,804.3 528.8,787.9 529.1,811.9 529.5,797.8 529.8,781.1 530.1,814.8 530.5,787.3 530.8,783.9 531.2,797.1 531.5,802.1 531.9,808.9 532.2,809.1 532.5,788.8 532.9,798.5 533.2,787.4 533.6,791.3 533.9,781.5 534.3,799.6 534.6,810.9 534.9,825.1 535.3,789.5 535.6,805.5 536.0,802.6 536.3,806.8 536.7,815.5 537.0,814.5 537.3,814.1 537.7,809.8 538.0,786.8 538.4,782.3 538.7,811.0 539.1,812.7 539.4,796.5 539.7,807.9 540.1,814.2 540.4,793.1 540.8,803.4 541.1,809.5 541.4,768.1 541.8,796.4 542.1,794.6 542.5,792.8 542.8,794.1 543.2,810.2 543.5,816.9 543.8,808.0 544.2,811.9 544.5,806.2 544.9,804.6 545.2,813.1 545.6,816.9 545.9,803.2 546.2,815.9 546.6,806.8 546.9,781.6 547.3,804.7 547.6,805.8 548.0,807.9 548.3,795.5 548.6,815.4 549.0,804.5 549.3,802.3 549.7,785.1 550.0,784.4 550.4,809.1 550.7,819.1 551.0,790.5 551.4,801.9 551.7,786.4 552.1,788.7 552.4,789.5 552.8,819.0 553.1,805.3 553.4,807.1 553.8,818.1 554.1,803.5 554.5,803.2 554.8,812.1 555.2,818.8 555.5,816.0 555.8,782.6 556.2,791.4 556.5,781.3 556.9,811.8 557.2,797.8 557.6,793.0 557.9,815.5 558.2,818.6 558.6,803.0 558.9,811.2 559.3,789.5 559.6,803.6 560.0,793.9 560.3,815.3 560.6,809.8 561.0,816.6 561.3,805.4 561.7,805.7 562.0,792.1 562.4,799.0 562.7,787.3 563.0,805.1 563.4,812.2 563.7,809.4 564.1,816.3 564.4,810.1 564.8,781.5 565.1,798.5 565.4,826.6 565.8,788.6 566.1,792.3 566.5,800.5 566.8,813.2 567.2,786.5 567.5,809.9 567.8,785.1 568.2,807.0 568.5,807.6 568.9,786.5 569.2,786.1 569.6,792.6 569.9,786.8 570.2,789.1 570.6,792.4 570.9,785.7 571.3,790.0 571.6,789.1 572.0,783.8 572.3,785.6 572.6,804.8 573.0,831.0 573.3,812.6 573.7,782.4 574.0,815.9 574.3,798.5 574.7,790.8 575.0,808.9 575.4,809.8 575.7,807.7 576.1,817.4 576.4,801.0 576.7,811.4 577.1,799.2 577.4,792.7 577.8,802.1 578.1,787.9 578.5,815.8 578.8,781.7 579.1,813.3 579.5,816.8 579.8,813.7 580.2,808.8 580.5,791.7 580.9,813.9 581.2,790.1 581.5,801.1 581.9,786.9 582.2,817.1 582.6,784.9 582.9,816.9 583.3,815.8 583.6,807.0 583.9,786.0 584.3,801.0 584.6,792.2 585.0,801.1 585.3,802.4 585.7,807.1 586.0,790.0 586.3,796.5 586.7,798.5 587.0,799.4 587.4,783.8 587.7,810.9 588.1,799.0 588.4,791.8 588.7,794.4 589.1,799.6 589.4,790.9 589.8,805.2 590.1,784.0 590.5,795.2 590.8,796.3 591.1,809.1 591.5,807.1 591.8,816.6 592.2,796.7 592.5,812.7 592.9,813.3 593.2,813.0 593.5,810.8 593.9,803.0 594.2,809.2 594.6,810.2 594.9,736.5 595.3,733.2 595.6,742.5 595.9,735.4 596.3,741.5 596.6,736.6 597.0,740.1 597.3,725.1 597.7,718.6 598.0,720.8 598.3,733.4 598.7,689.0 599.0,673.9 599.4,702.4 599.7,690.0 600.1,676.7 600.4,708.1 600.7,687.9 601.1,673.4 601.4,673.4 601.8,675.5 602.1,689.3 602.5,698.5 602.8,710.2 603.1,684.8 603.5,671.6 603.8,688.1 604.2,673.5 604.5,686.4 604.9,684.1 605.2,680.3 605.5,697.1 605.9,685.0 606.2,680.2 606.6,688.7 606.9,685.7 607.2,675.3 607.6,684.3 607.9,698.7 608.3,682.1 608.6,691.2 609.0,699.2 609.3,676.1 609.6,682.3 610.0,685.8 610.3,688.4 610.7,686.7 611.0,793.2 611.4,802.3 611.7,771.0 612.0,798.8 612.4,804.1 612.7,811.8 613.1,811.6 613.4,797.6 613.8,786.2 614.1,790.6 614.4,806.8 614.8,798.9 615.1,803.2 615.5,800.2 615.8,808.1 616.2,815.5 616.5,803.3 616.8,797.4 617.2,799.0 617.5,801.9 617.9,810.4 618.2,806.8 618.6,811.3 618.9,804.9 619.2,818.0 619.6,814.1 619.9,811.9 620.3,799.9 620.6,813.7 621.0,789.3 621.3,787.8 621.6,799.0 622.0,800.7 622.3,792.7 622.7,789.9 623.0,808.2 623.4,805.0 623.7,805.7 624.0,819.0 624.4,806.7 624.7,799.7 625.1,800.7 625.4,811.9 625.8,822.7 626.1,808.0 626.4,801.2 626.8,816.3 627.1,818.2 627.5,816.5 627.8,723.6 628.2,690.7 628.5,690.7 628.8,708.9 629.2,707.9 629.5,709.4 629.9,706.8 630.2,700.5 630.6,697.6 630.9,713.2 631.2,707.8 631.6,702.6 631.9,706.2 632.3,716.6 632.6,705.2 633.0,709.3 633.3,715.7 633.6,683.3 634.0,703.5 634.3,708.9 634.7,694.4 635.0,696.6 635.4,682.5 635.7,695.6 636.0,704.1 636.4,709.2 636.7,688.9 637.1,702.6 637.4,680.7 637.8,695.8 638.1,686.4 638.4,691.8 638.8,671.6 639.1,697.2 639.5,689.5 639.8,687.6 640.1,699.4 640.5,692.7 640.8,694.8 641.2,686.6 641.5,687.3 641.9,677.2 642.2,790.1 642.5,796.7 642.9,841.2 643.2,862.5 643.6,789.6 643.9,793.0 644.3,789.1 644.6,811.7 644.9,810.0 645.3,792.5 645.6,805.3 646.0,783.8 646.3,803.4 646.7,809.1 647.0,801.7 647.3,806.4 647.7,794.9 648.0,787.7 648.4,801.9 648.7,809.9 649.1,802.8 649.4,793.5 649.7,806.1 650.1,801.0 650.4,809.5 650.8,801.2 651.1,803.6 651.5,815.0 651.8,793.3 652.1,810.7 652.5,816.7 652.8,811.9 653.2,802.8 653.5,808.6 653.9,798.3 654.2,804.6 654.5,803.4 654.9,791.5 655.2,812.0 655.6,807.3 655.9,822.3 656.3,815.0 656.6,814.5 656.9,810.1 657.3,814.6 657.6,824.7 658.0,814.8 658.3,820.6 658.7,815.4 659.0,810.3 659.3,799.9 659.7,801.8 660.0,807.5 660.4,819.2 660.7,808.5 661.1,713.4 661.4,696.8 661.7,701.5 662.1,662.8 662.4,671.0 662.8,703.2 663.1,710.0 663.5,679.8 663.8,709.5 664.1,671.9 664.5,668.2 664.8,680.6 665.2,680.0 665.5,679.7 665.9,676.9 666.2,698.6 666.5,711.6 666.9,683.1 667.2,703.8 667.6,676.2 667.9,667.3 668.3,687.7 668.6,683.4 668.9,668.7 669.3,696.6 669.6,701.4 670.0,697.4 670.3,696.3 670.7,691.0 671.0,709.9 671.3,696.2 671.7,679.1 672.0,704.6 672.4,700.8 672.7,711.4 673.0,682.5 673.4,695.8 673.7,684.4 674.1,699.4 674.4,676.0 674.8,696.9 675.1,699.1 675.4,683.4 675.8,781.9 676.1,767.3 676.5,784.4 676.8,773.9 677.2,768.3 677.5,747.4 677.8,774.3 678.2,758.9 678.5,778.9 678.9,778.4 679.2,774.7 679.6,762.0 679.9,770.6 680.2,751.7 680.6,780.6 680.9,778.5 681.3,779.5 681.6,757.2 682.0,778.3 682.3,755.3 682.6,781.5 683.0,774.8 683.3,782.4 683.7,778.5 684.0,777.0 684.4,778.5 684.7,774.7 685.0,788.2 685.4,769.6 685.7,790.9 686.1,772.4 686.4,784.8 686.8,761.1 687.1,788.1 687.4,779.5 687.8,778.3 688.1,768.9 688.5,768.9 688.8,781.3 689.2,778.5 689.5,773.9 689.8,782.9 690.2,778.8 690.5,764.7 690.9,781.7 691.2,780.4 691.6,794.8 691.9,797.5 692.2,787.6 692.6,782.7 692.9,767.0 693.3,785.3 693.6,781.9 694.0,784.9 694.3,657.6 694.6,655.5 695.0,695.7 695.3,676.5 695.7,675.1 696.0,659.6 696.4,694.3 696.7,677.5 697.0,681.6 697.4,680.5 697.7,673.3 698.1,689.6 698.4,673.7 698.8,682.7 699.1,703.9 699.4,659.4 699.8,708.4 700.1,704.1 700.5,674.1 700.8,675.6 701.2,661.9 701.5,648.8 701.8,675.3 702.2,675.5 702.5,692.5 702.9,705.1 703.2,684.5 703.6,677.0 703.9,673.6 704.2,667.4 704.6,658.2 704.9,674.9 705.3,682.2 705.6,666.0 705.9,664.6 706.3,683.5 706.6,674.7 707.0,685.2 707.3,698.3 707.7,709.5 708.0,679.1 708.3,667.8 708.7,707.5 709.0,698.0 709.4,707.2 709.7,679.2 710.1,698.2 710.4,699.3 710.7,769.3 711.1,761.4 711.4,770.1 711.8,784.5 712.1,782.7 712.5,779.5 712.8,787.4 713.1,784.8 713.5,781.0 713.8,789.4 714.2,774.4 714.5,770.5 714.9,783.4 715.2,789.8 715.5,767.0 715.9,789.5 716.2,774.0 716.6,772.0 716.9,787.2 717.3,784.6 717.6,792.7 717.9,764.9 718.3,769.2 718.6,770.9 719.0,765.7 719.3,793.4 719.7,781.0 720.0,782.0 720.3,790.7 720.7,769.7 721.0,774.3 721.4,780.1 721.7,797.8 722.1,770.8 722.4,775.3 722.7,777.4 723.1,775.4 723.4,779.7 723.8,771.0 724.1,794.2 724.5,800.8 724.8,792.4 725.1,803.1 725.5,798.6 725.8,794.5 726.2,777.4 726.5,773.2 726.9,681.8 727.2,725.1 727.5,683.4 727.9,731.1 728.2,708.8 728.6,730.0 728.9,722.5 729.3,700.0 729.6,690.5 729.9,716.0 730.3,725.5 730.6,716.6 731.0,729.9 731.3,724.9 731.7,736.4 732.0,726.1 732.3,722.2 732.7,716.6 733.0,730.3 733.4,727.3 733.7,730.0 734.1,716.1 734.4,716.9 734.7,716.5 735.1,723.7 735.4,711.5 735.8,727.2 736.1,720.7 736.5,731.0 736.8,731.7 737.1,734.3 737.5,725.3 737.8,710.1 738.2,730.8 738.5,734.6 738.8,710.7 739.2,716.2 739.5,724.0 739.9,719.0 740.2,720.8 740.6,728.5 740.9,719.8 741.2,731.0 741.6,729.4 741.9,714.1 742.3,710.3 742.6,723.5 743.0,796.5 743.3,761.5 743.6,790.8 744.0,768.1 744.3,795.0 744.7,783.3 745.0,798.0 745.4,768.4 745.7,794.1 746.0,799.0 746.4,786.9 746.7,794.2 747.1,793.3 747.4,805.0 747.8,810.5 748.1,807.0 748.4,793.9 748.8,811.3 749.1,810.0 749.5,805.2 749.8,808.5 750.2,786.2 750.5,788.3 750.8,813.4 751.2,808.1 751.5,798.6 751.9,794.1 752.2,806.3 752.6,795.4 752.9,790.9 753.2,796.7 753.6,797.4 753.9,821.4 754.3,818.0 754.6,793.4 755.0,802.4 755.3,811.0 755.6,794.6 756.0,796.8 756.3,821.8 756.7,796.2 757.0,798.6 757.4,809.4 757.7,828.8 758.0,810.4 758.4,827.8 758.7,804.3 759.1,801.8 759.4,794.9 759.8,814.8 760.1,821.6 760.4,812.6 760.8,826.5 761.1,813.6 761.5,821.5 761.8,815.2 762.2,815.7 762.5,813.2 762.8,827.5 763.2,808.2 763.5,827.0 763.9,815.5 764.2,829.3 764.6,800.2 764.9,833.9 765.2,824.0 765.6,820.2 765.9,790.9 766.3,809.0 766.6,803.8 767.0,799.3 767.3,803.6 767.6,814.8 768.0,809.7 768.3,814.7 768.7,821.1 769.0,822.9 769.4,808.5 769.7,793.5 770.0,801.2 770.4,822.2 770.7,808.4 771.1,818.7 771.4,813.9 771.7,823.7 772.1,809.4 772.4,818.1 772.8,820.5 773.1,814.8 773.5,804.2 773.8,818.4 774.1,797.0 774.5,792.2 774.8,791.0 775.2,823.3 775.5,798.7 775.9,804.2 776.2,793.9 776.5,805.5 776.9,800.9 777.2,801.7 777.6,798.7 777.9,790.5 778.3,805.4 778.6,803.2 778.9,793.8 779.3,806.0 779.6,801.4 780.0,790.1 780.3,809.8 780.7,793.7 781.0,823.4 781.3,796.6 781.7,799.4 782.0,790.9 782.4,816.5 782.7,807.4 783.1,792.0 783.4,810.0 783.7,781.3 784.1,794.2 784.4,795.9 784.8,802.4 785.1,792.6 785.5,795.3 785.8,804.0 786.1,810.8 786.5,793.3 786.8,809.3 787.2,800.8 787.5,814.2 787.9,812.8 788.2,808.7 788.5,794.1 788.9,805.3 789.2,797.5 789.6,792.4 789.9,810.4 790.3,806.2 790.6,811.7 790.9,819.0 791.3,805.1 791.6,809.2 792.0,805.3 792.3,813.9 792.7,824.6 793.0,823.5 793.3,807.0 793.7,820.9 794.0,820.0 794.4,809.3 794.7,817.8 795.1,825.1 795.4,804.5 795.7,819.0 796.1,820.3 796.4,811.8 796.8,818.6 797.1,822.8 797.5,827.3 797.8,829.2 798.1,828.0 798.5,817.1 798.8,815.9 799.2,830.6 799.5,804.9 799.9,816.8 800.2,806.1 800.5,814.4 800.9,831.6 801.2,812.1 801.6,820.6 801.9,816.2 802.3,830.3 802.6,831.0 802.9,833.9 803.3,824.1 803.6,816.6 804.0,829.6 804.3,823.9 804.6,806.2 805.0,820.4 805.3,812.5 805.7,812.3 806.0,832.3 806.4,804.6 806.7,828.1 807.0,821.3 807.4,814.4 807.7,819.7 808.1,818.7 808.4,805.1 808.8,803.1 809.1,813.6 809.4,815.4 809.8,801.9 810.1,823.9 810.5,804.1 810.8,812.7 811.2,805.7 811.5,800.0 811.8,815.5 812.2,801.8 812.5,823.7 812.9,809.8 813.2,800.0 813.6,808.0 813.9,822.3 814.2,799.8 814.6,822.7 814.9,806.8 815.3,796.8 815.6,802.5 816.0,806.7 816.3,812.1 816.6,821.7 817.0,814.6 817.3,809.2 817.7,806.9 818.0,808.3 818.4,819.3 818.7,805.1 819.0,801.5 819.4,805.1 819.7,820.7 820.1,806.7 820.4,806.2 820.8,798.8 821.1,807.1 821.4,791.8 821.8,812.7 822.1,814.1 822.5,809.2 822.8,793.0 823.2,798.1 823.5,794.3 823.8,789.4 824.2,816.1 824.5,814.0 824.9,738.5 825.2,736.8 825.6,734.5 825.9,752.2 826.2,760.1 826.6,765.2 826.9,747.8 827.3,755.9 827.6,741.5 828.0,738.1 828.3,753.7 828.6,736.7 829.0,741.9 829.3,734.8 829.7,755.1 830.0,755.1 830.4,748.3 830.7,754.6 831.0,747.3 831.4,741.8 831.7,763.7 832.1,761.5 832.4,744.0 832.8,767.8 833.1,762.9 833.4,750.6 833.8,758.8 834.1,744.9 834.5,748.2 834.8,755.6 835.2,736.6 835.5,765.6 835.8,764.0 836.2,760.8 836.5,745.8 836.9,766.1 837.2,765.7 837.5,762.3 837.9,728.6 838.2,750.9 838.6,752.9 838.9,758.0 839.3,767.1 839.6,752.8 839.9,759.7 840.3,751.4 840.6,742.5 841.0,751.0 841.3,782.2 841.7,790.7 842.0,781.1 842.3,802.2 842.7,789.5 843.0,787.6 843.4,803.5 843.7,784.0 844.1,793.2 844.4,779.8 844.7,793.8 845.1,773.3 845.4,774.8 845.8,791.2 846.1,777.8 846.5,784.6 846.8,781.3 847.1,777.0 847.5,791.3 847.8,788.2 848.2,789.0 848.5,801.4 848.9,796.3 849.2,797.2 849.5,793.0 849.9,791.6 850.2,802.3 850.6,777.3 850.9,803.6 851.3,796.5 851.6,800.5 851.9,793.1 852.3,789.2 852.6,789.0 853.0,790.6 853.3,795.8 853.7,803.3 854.0,793.2 854.3,785.5 854.7,796.5 855.0,785.3 855.4,785.9 855.7,783.4 856.1,795.4 856.4,789.7 856.7,793.7 857.1,791.0 857.4,777.2 857.8,797.3 858.1,784.0 858.5,739.1 858.8,751.6 859.1,743.3 859.5,753.5 859.8,741.1 860.2,752.3 860.5,748.4 860.9,741.3 861.2,739.2 861.5,752.8 861.9,751.1 862.2,757.6 862.6,746.0 862.9,748.4 863.3,749.2 863.6,748.5 863.9,749.9 864.3,750.4 864.6,742.4 865.0,751.4 865.3,746.6 865.7,744.7 866.0,740.6 866.3,682.0 866.7,684.4 867.0,689.2 867.4,705.7 867.7,706.0 868.1,696.9 868.4,709.9 868.7,694.0 869.1,700.4 869.4,705.0 869.8,701.6 870.1,676.0 870.4,688.6 870.8,687.8 871.1,710.0 871.5,694.1 871.8,682.5 872.2,696.4 872.5,702.8 872.8,697.6 873.2,694.7 873.5,690.7 873.9,688.3 874.2,705.2 874.6,784.7 874.9,772.9 875.2,765.3 875.6,782.1 875.9,777.7 876.3,779.8 876.6,777.2 877.0,790.7 877.3,790.6 877.6,759.3 878.0,764.1 878.3,760.5 878.7,765.5 879.0,763.4 879.4,779.4 879.7,781.7 880.0,768.5 880.4,773.0 880.7,767.2 881.1,769.0 881.4,770.0 881.8,778.6 882.1,768.8 882.4,785.2 882.8,783.3 883.1,771.5 883.5,779.5 883.8,792.1 884.2,799.7 884.5,785.2 884.8,786.8 885.2,778.3 885.5,795.1 885.9,798.3 886.2,790.7 886.6,782.1 886.9,786.2 887.2,776.9 887.6,816.3 887.9,777.7 888.3,795.4 888.6,803.2 889.0,780.8 889.3,797.8 889.6,797.7 890.0,782.2 890.3,791.3 890.7,796.3 891.0,797.2 891.4,787.9 891.7,759.4 892.0,757.1 892.4,756.3 892.7,751.3 893.1,739.9 893.4,757.7 893.8,770.7 894.1,756.0 894.4,763.4 894.8,743.3 895.1,717.0 895.5,685.6 895.8,695.5 896.2,703.0 896.5,693.1 896.8,684.0 897.2,689.0 897.5,690.9 897.9,708.8 898.2,680.9 898.6,679.2 898.9,692.4 899.2,685.5 899.6,698.9 899.9,685.3 900.3,674.5 900.6,690.5 901.0,683.2 901.3,683.7 901.6,703.6 902.0,714.6 902.3,694.0 902.7,698.2 903.0,710.7 903.3,681.2 903.7,695.4 904.0,695.7 904.4,692.7 904.7,713.8 905.1,691.2 905.4,685.1 905.7,685.8 906.1,698.8 906.4,685.3 906.8,775.6 907.1,752.2 907.5,761.6 907.8,761.8 908.1,760.8 908.5,759.6 908.8,756.9 909.2,762.6 909.5,782.5 909.9,772.8 910.2,776.4 910.5,771.2 910.9,757.8 911.2,785.5 911.6,778.3 911.9,768.5 912.3,772.8 912.6,761.7 912.9,779.4 913.3,779.5 913.6,788.8 914.0,764.9 914.3,767.2 914.7,758.6 915.0,764.7 915.3,778.0 915.7,765.5 916.0,769.2 916.4,767.7 916.7,789.4 917.1,778.5 917.4,763.0 917.7,771.8 918.1,794.9 918.4,788.5 918.8,788.3 919.1,786.1 919.5,780.5 919.8,783.9 920.1,795.1 920.5,792.2 920.8,776.3 921.2,776.2 921.5,797.7 921.9,797.8 922.2,779.9 922.5,790.8 922.9,773.2 923.2,775.7 923.6,777.3 923.9,801.0 924.3,705.9 924.6,714.0 924.9,715.8 925.3,715.3 925.6,711.1 926.0,703.6 926.3,699.4 926.7,699.1 927.0,702.9 927.3,698.3 927.7,688.9 928.0,699.6 928.4,690.3 928.7,699.5 929.1,704.0 929.4,699.1 929.7,690.8 930.1,683.0 930.4,673.7 930.8,689.6 931.1,684.6 931.5,683.8 931.8,669.5 932.1,673.5 932.5,687.8 932.8,659.9 933.2,675.8 933.5,675.1 933.9,662.7 934.2,687.5 934.5,679.0 934.9,676.4 935.2,684.4 935.6,682.1 935.9,683.0 936.2,664.6 936.6,685.3 936.9,674.7 937.3,676.7 937.6,695.5 938.0,691.2 938.3,693.5 938.6,669.9 939.0,691.3 939.3,671.4 939.7,669.5 940.0,688.1 940.4,686.7 940.7,688.0 941.0,698.9 941.4,764.1 941.7,771.5 942.1,765.7 942.4,763.8 942.8,769.7 943.1,782.9 943.4,776.1 943.8,783.7 944.1,776.5 944.5,772.2 944.8,770.0 945.2,754.8 945.5,763.0 945.8,776.3 946.2,781.3 946.5,772.2 946.9,790.3 947.2,765.6 947.6,789.1 947.9,772.3 948.2,789.1 948.6,776.4 948.9,789.4 949.3,789.8 949.6,781.2 950.0,769.7 950.3,766.7 950.6,776.0 951.0,784.5 951.3,793.5 951.7,783.8 952.0,780.4 952.4,787.1 952.7,784.1 953.0,785.4 953.4,784.9 953.7,775.6 954.1,783.1 954.4,806.1 954.8,788.5 955.1,798.1 955.4,781.9 955.8,789.5 956.1,803.3 956.5,788.7 956.8,798.7 957.2,695.6 957.5,690.2 957.8,673.1 958.2,699.6 958.5,696.2 958.9,680.6 959.2,706.0 959.6,692.4 959.9,685.2 960.2,706.9 960.6,692.9 960.9,679.3 961.3,703.9 961.6,701.5 962.0,694.3 962.3,681.8 962.6,694.5 963.0,686.8 963.3,709.2 963.7,703.2 964.0,693.3 964.4,691.2 964.7,705.3 965.0,662.8 965.4,693.3 965.7,696.6 966.1,695.8 966.4,681.5 966.8,685.1 967.1,696.5 967.4,712.0 967.8,703.0 968.1,700.4 968.5,697.4 968.8,698.4 969.1,709.2 969.5,705.7 969.8,710.6 970.2,693.3 970.5,697.2 970.9,698.5 971.2,701.6 971.5,710.3 971.9,713.1 972.2,688.3 972.6,708.6 972.9,770.6 973.3,782.1 973.6,781.4 973.9,773.6 974.3,802.2 974.6,780.0 975.0,798.7 975.3,780.5 975.7,793.0 976.0,804.7 976.3,805.4 976.7,806.2 977.0,795.9 977.4,787.1 977.7,776.3 978.1,793.4 978.4,797.8 978.7,786.5 979.1,787.5 979.4,811.3 979.8,785.4 980.1,794.2 980.5,789.0 980.8,791.7 981.1,807.8 981.5,811.2 981.8,801.2 982.2,812.3 982.5,801.7 982.9,803.8 983.2,804.9 983.5,805.8 983.9,801.5 984.2,801.3 984.6,793.6 984.9,813.2 985.3,815.9 985.6,791.6 985.9,800.7 986.3,792.1 986.6,793.7 987.0,793.7 987.3,810.3 987.7,799.5 988.0,811.2 988.3,828.5 988.7,801.4 989.0,803.7 989.4,804.3 989.7,814.4 990.1,824.3 990.4,805.8 990.7,813.1 991.1,810.5 991.4,814.8 991.8,812.1 992.1,804.0 992.5,810.8 992.8,814.1 993.1,797.1 993.5,807.2 993.8,831.0 994.2,815.0 994.5,796.4 994.9,812.0 995.2,804.9 995.5,807.2 995.9,802.8 996.2,807.7 996.6,811.9 996.9,801.4 997.3,807.1 997.6,795.2 997.9,768.7 998.3,771.2 998.6,773.4 999.0,765.3 999.3,784.4 999.7,794.1 1000.0,775.0 1000.3,783.4 1000.7,797.8 1001.0,770.9 1001.4,770.0 1001.7,787.1 1002.0,792.1 1002.4,794.3 1002.7,775.9 1003.1,780.6 1003.4,778.9 1003.8,785.0 1004.1,768.4 1004.4,783.4 1004.8,786.0 1005.1,776.9 1005.5,773.0 1005.8,774.3 1006.2,768.4 1006.5,767.7 1006.8,767.6 1007.2,767.0 1007.5,769.3 1007.9,770.3 1008.2,780.5 1008.6,766.6 1008.9,775.0 1009.2,773.1 1009.6,764.9 1009.9,779.0 1010.3,775.8 1010.6,783.7 1011.0,763.7 1011.3,780.7 1011.6,782.3 1012.0,791.3 1012.3,766.5 1012.7,786.1 1013.0,776.3 1013.4,786.3 1013.7,776.5 1014.0,773.6 1014.4,798.6 1014.7,795.8 1015.1,795.2 1015.4,792.8 1015.8,790.6 1016.1,789.8 1016.4,779.0 1016.8,808.0 1017.1,810.5 1017.5,805.8 1017.8,781.6 1018.2,809.4 1018.5,809.9 1018.8,813.6 1019.2,794.7 1019.5,778.7 1019.9,807.7 1020.2,790.6 1020.6,808.3 1020.9,783.6 1021.2,778.6 1021.6,812.2 1021.9,801.7 1022.3,785.6 1022.6,778.0 1023.0,800.9 1023.3,807.1 1023.6,812.5 1024.0,806.9 1024.3,810.8 1024.7,798.0 1025.0,810.4 1025.4,778.3 1025.7,820.7 1026.0,810.6 1026.4,790.9 1026.7,790.4 1027.1,791.7 1027.4,806.5 1027.8,807.9 1028.1,806.8 1028.4,807.7 1028.8,808.1 1029.1,807.4 1029.5,796.4 1029.8,802.1 1030.2,790.5 1030.5,802.3 1030.8,788.1 1031.2,803.0 1031.5,798.7 1031.9,801.2 1032.2,798.9 1032.6,792.2 1032.9,775.1 1033.2,781.3 1033.6,782.6 1033.9,777.5 1034.3,791.9 1034.6,792.1 1034.9,785.9 1035.3,783.7 1035.6,783.7 1036.0,777.1 1036.3,795.5 1036.7,787.2 1037.0,789.4 1037.3,775.0 1037.7,788.4 1038.0,780.4 1038.4,775.9 1038.7,803.9 1039.1,790.3 1039.4,782.8 1039.7,822.2 1040.1,797.1 1040.4,775.2 1040.8,775.3 1041.1,778.5 1041.5,773.7 1041.8,771.4 1042.1,795.7 1042.5,802.1 1042.8,781.3 1043.2,775.7 1043.5,785.4 1043.9,780.7 1044.2,780.0 1044.5,777.6 1044.9,800.8 1045.2,785.4 1045.6,771.0 1045.9,784.8 1046.3,793.3 1046.6,779.1 1046.9,790.9 1047.3,792.7 1047.6,777.6 1048.0,786.7 1048.3,794.9 1048.7,770.2 1049.0,775.8 1049.3,771.8 1049.7,769.9 1050.0,776.2 1050.4,782.8 1050.7,779.6 1051.1,792.0 1051.4,785.5 1051.7,776.0 1052.1,787.5 1052.4,779.5 1052.8,769.8 1053.1,789.3 1053.5,770.8 1053.8,783.4 1054.1,781.8 1054.5,772.3 1054.8,663.1 1055.2,650.7 1055.5,664.5 1055.9,657.3 1056.2,663.4 1056.5,671.2 1056.9,664.1 1057.2,652.3 1057.6,655.9 1057.9,654.6 1058.3,669.7 1058.6,664.8 1058.9,656.0 1059.3,659.7 1059.6,658.5 1060.0,649.1 1060.3,651.0 1060.7,655.2 1061.0,648.0 1061.3,649.1 1061.7,665.0 1062.0,674.6 1062.4,668.8 1062.7,653.2 1063.1,673.9 1063.4,655.7 1063.7,674.7 1064.1,669.7 1064.4,650.2 1064.8,644.4 1065.1,657.4 1065.5,658.7 1065.8,661.7 1066.1,656.6 1066.5,638.3 1066.8,642.7 1067.2,650.4 1067.5,616.1 1067.8,644.4 1068.2,653.4 1068.5,642.0 1068.9,643.2 1069.2,633.4 1069.6,635.0 1069.9,641.1 1070.2,653.7 1070.6,643.6 1070.9,639.7 1071.3,661.9 1071.6,771.0 1072.0,734.9 1072.3,751.9 1072.6,746.7 1073.0,753.7 1073.3,746.6 1073.7,749.8 1074.0,747.7 1074.4,752.2 1074.7,746.7 1075.0,739.4 1075.4,767.6 1075.7,754.0 1076.1,759.5 1076.4,769.4 1076.8,740.9 1077.1,770.5 1077.4,784.0 1077.8,753.3 1078.1,777.0 1078.5,784.6 1078.8,783.0 1079.2,761.4 1079.5,761.7 1079.8,763.0 1080.2,764.0 1080.5,748.2 1080.9,774.0 1081.2,779.3 1081.6,785.2 1081.9,782.1 1082.2,758.0 1082.6,765.1 1082.9,766.6 1083.3,766.5 1083.6,782.5 1084.0,794.9 1084.3,764.8 1084.6,778.1 1085.0,771.9 1085.3,756.9 1085.7,775.5 1086.0,796.7 1086.4,767.7 1086.7,775.8 1087.0,759.4 1087.4,790.4 1087.7,764.7 1088.1,781.4 1088.4,793.9 1088.8,799.2 1089.1,783.6 1089.4,630.5 1089.8,614.4 1090.1,612.2 1090.5,603.8 1090.8,658.4 1091.2,664.8 1091.5,655.5 1091.8,632.5 1092.2,660.8 1092.5,666.8 1092.9,633.6 1093.2,652.1 1093.6,642.8 1093.9,640.7 1094.2,656.7 1094.6,663.7 1094.9,642.8 1095.3,658.6 1095.6,653.4 1096.0,644.2 1096.3,617.6 1096.6,634.2 1097.0,623.7 1097.3,609.4 1097.7,641.7 1098.0,633.2 1098.4,632.8 1098.7,624.8 1099.0,624.8 1099.4,621.0 1099.7,607.6 1100.1,603.8 1100.4,640.5 1100.7,626.4 1101.1,609.8 1101.4,615.8 1101.8,616.2 1102.1,628.6 1102.5,629.2 1102.8,633.7 1103.1,649.0 1103.5,623.2 1103.8,633.7 1104.2,637.8 1104.5,771.4 1104.9,757.2 1105.2,753.8 1105.5,738.6 1105.9,739.1 1106.2,773.4 1106.6,745.3 1106.9,776.3 1107.3,768.5 1107.6,764.3 1107.9,759.2 1108.3,744.5 1108.6,761.4 1109.0,754.5 1109.3,758.9 1109.7,749.8 1110.0,761.9 1110.3,769.1 1110.7,770.1 1111.0,773.2 1111.4,777.3 1111.7,779.3 1112.1,769.0 1112.4,758.3 1112.7,748.9 1113.1,767.6 1113.4,749.0 1113.8,762.4 1114.1,771.3 1114.5,749.9 1114.8,776.4 1115.1,750.8 1115.5,775.2 1115.8,776.6 1116.2,765.0 1116.5,763.4 1116.9,777.7 1117.2,784.9 1117.5,759.0 1117.9,776.7 1118.2,758.7 1118.6,756.6 1118.9,788.4 1119.3,789.9 1119.6,792.4 1119.9,782.9 1120.3,791.1 1120.6,759.3 1121.0,781.7 1121.3,776.1 1121.7,782.5 1122.0,777.3 1122.3,643.4 1122.7,660.8 1123.0,644.3 1123.4,605.8 1123.7,658.1 1124.1,631.3 1124.4,664.1 1124.7,627.1 1125.1,662.9 1125.4,647.7 1125.8,648.4 1126.1,614.0 1126.5,617.2 1126.8,621.5 1127.1,661.0 1127.5,652.3 1127.8,615.5 1128.2,637.0 1128.5,620.9 1128.9,634.8 1129.2,647.0 1129.5,639.2 1129.9,655.0 1130.2,641.7 1130.6,647.6 1130.9,629.2 1131.3,628.3 1131.6,630.7 1131.9,638.5 1132.3,627.4 1132.6,651.8 1133.0,623.2 1133.3,640.9 1133.6,622.0 1134.0,624.4 1134.3,647.4 1134.7,635.5 1135.0,633.0 1135.4,641.8 1135.7,647.2 1136.0,641.9 1136.4,654.1 1136.7,757.7 1137.1,768.6 1137.4,764.5 1137.8,761.2 1138.1,755.1 1138.4,769.6 1138.8,757.4 1139.1,735.8 1139.5,755.3 1139.8,737.1 1140.2,740.1 1140.5,740.2 1140.8,767.6 1141.2,744.5 1141.5,740.8 1141.9,748.2 1142.2,742.9 1142.6,775.6 1142.9,763.9 1143.2,768.9 1143.6,743.7 1143.9,767.6 1144.3,768.1 1144.6,749.2 1145.0,745.1 1145.3,745.3 1145.6,759.7 1146.0,774.9 1146.3,755.9 1146.7,783.7 1147.0,761.5 1147.4,751.4 1147.7,774.5 1148.0,776.6 1148.4,762.0 1148.7,749.6 1149.1,769.0 1149.4,785.5 1149.8,753.7 1150.1,787.6 1150.4,758.7 1150.8,765.4 1151.1,756.1 1151.5,754.1 1151.8,791.6 1152.2,759.4 1152.5,779.9 1152.8,755.7 1153.2,779.5 1153.5,778.9 1153.9,765.5 1154.2,763.1 1154.6,770.6 1154.9,760.0 1155.3,697.2 1155.7,646.6 1156.0,622.5 1156.1,613.6 1156.2,609.3"/>
<rect x="761" y="992.6" width="124.6" height="29.8" fill="#fff"/><rect x="876.9" y="982" width="1" height="49" fill="#fff"/>
<path d="M771.8 1006H799.4" stroke="#3e8aeb" stroke-width="2"/><path d="M783.6 1006.6h4.800l-2.400 2.200z" fill="#3e8aeb"/>
<text x="805.4" y="1011.5" font-family='"Liberation Sans", sans-serif' font-size="14" fill="#111">12345678</text>
</svg>
<svg class="a" style="left:312px;top:748px" width="70" height="50" viewBox="312 748 70 50"><path d="M314.800 772.200L345.600 750.700V763.100H379.900V781.700H345.600V793.500z" fill="#fa0006"/></svg>

</body></html>
